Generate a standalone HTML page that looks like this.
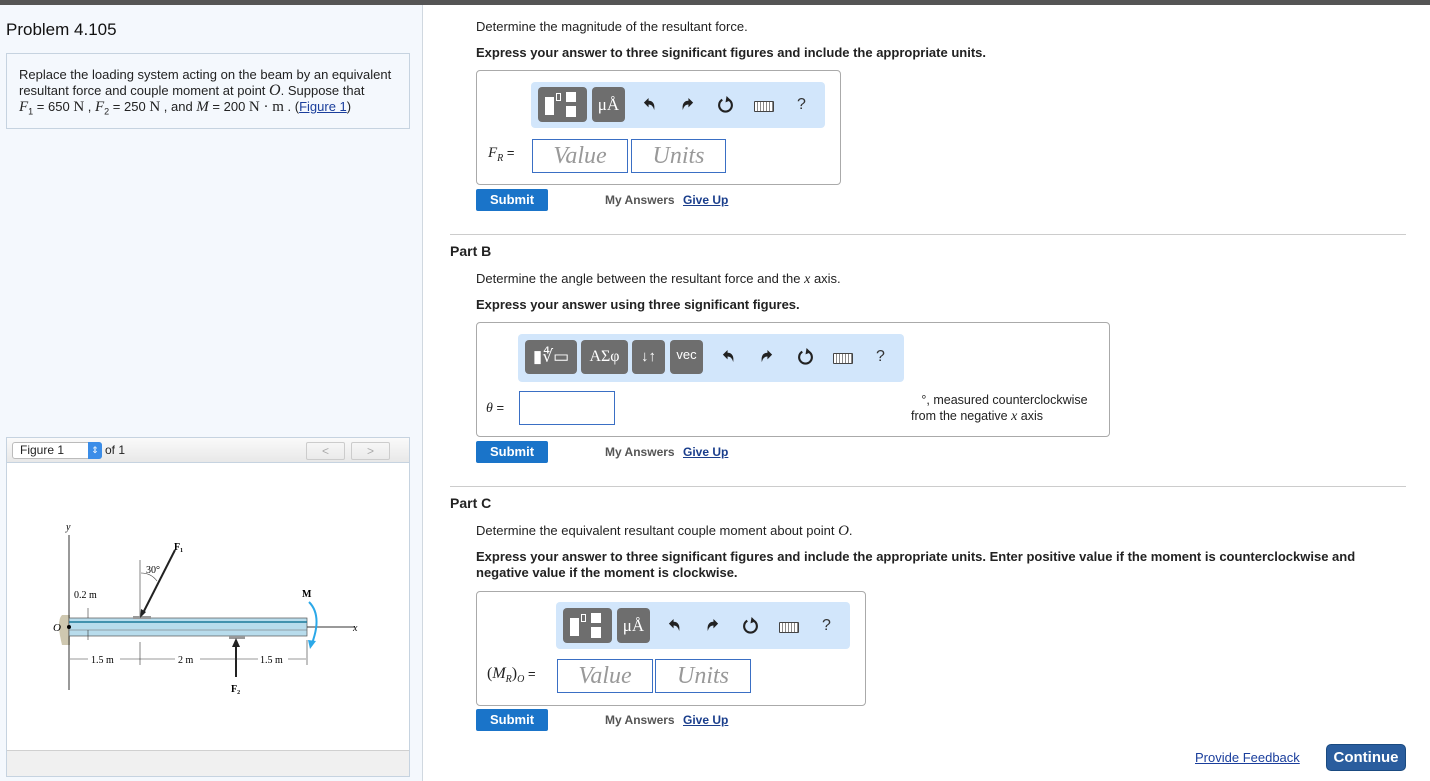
<!DOCTYPE html><html><head><meta charset="utf-8"><style>
*{margin:0;padding:0;box-sizing:border-box}
body{width:1430px;height:781px;overflow:hidden;font-family:"Liberation Sans",sans-serif;background:#fff;position:relative;font-size:13px;color:#222}
.a{position:absolute}
.m{font-family:"Liberation Serif",serif;font-style:italic}
.box{border:1px solid #aaa;border-radius:4px;background:#fff}
.tb{background:#d2e6fb;border-radius:4px}
.btn{background:#6e6e6e;border-radius:4px;color:#fff;text-align:center;font-family:"Liberation Serif",serif}
.in{border:1px solid #3a6fc4;background:#fff;color:#999;font-family:"Liberation Serif",serif;font-style:italic;font-size:24px;text-align:center}
.sub{background:#1a74c9;color:#fff;font-weight:bold;font-size:13px;text-align:center;border-radius:2px;width:72px;height:22px;line-height:22px}
.ma{font-weight:bold;font-size:12px;color:#555}
.gu{font-weight:bold;font-size:12px;color:#1a3e8c;text-decoration:underline}
.bold{font-weight:bold}
.kb{width:20px;height:11px;border:1.5px solid #444;border-radius:1px;background:repeating-linear-gradient(90deg,#fff 0 2px,#888 2px 3px)}
</style></head><body>
<div class="a" style="left:0;top:0;width:1430px;height:5px;background:#555"></div>
<div class="a" style="left:0;top:5px;width:423px;height:776px;background:#f4f8fd;border-right:1px solid #d0d8e0"></div>
<div class="a" style="left:6px;top:20px;font-size:17px;color:#111">Problem 4.105</div>
<div class="a" style="left:6px;top:53px;width:404px;height:76px;border:1px solid #c6d3e0;background:#f4f8fd"></div>
<div class="a" style="left:19px;top:67px;font-size:13px;line-height:16px;color:#222">Replace the loading system acting on the beam by an equivalent<br>resultant force and couple moment at point <span class="m" style="font-size:16px">O</span>. Suppose that<br><span class="m" style="font-size:15px">F</span><sub style="font-size:9px">1</sub> = 650 <span style="font-family:'Liberation Serif';font-size:15px">N</span> , <span class="m" style="font-size:15px">F</span><sub style="font-size:9px">2</sub> = 250 <span style="font-family:'Liberation Serif';font-size:15px">N</span> , and <span class="m" style="font-size:15px">M</span> = 200 <span style="font-family:'Liberation Serif';font-size:15px">N · m</span> . (<span style="color:#1a3e9c;text-decoration:underline">Figure 1</span>)</div>

<div class="a" style="left:6px;top:437px;width:404px;height:340px;border:1px solid #c6d3e0;background:#fff"></div>
<div class="a" style="left:7px;top:438px;width:402px;height:25px;background:linear-gradient(#fafafa,#e8e8e8);border-bottom:1px solid #c6d3e0"></div>
<div class="a" style="left:12px;top:442px;width:90px;height:17px;border:1px solid #bbb;border-radius:3px;background:#fff;font-size:12px;padding-left:7px;line-height:15px">Figure 1</div>
<div class="a" style="left:88px;top:442px;width:14px;height:17px;background:#3b8de8;border-radius:0 3px 3px 0;color:#fff;font-size:9px;text-align:center;line-height:17px">⇕</div>
<div class="a" style="left:105px;top:443px;font-size:12px">of 1</div>
<div class="a" style="left:306px;top:442px;width:39px;height:18px;border:1px solid #ccc;border-radius:2px;color:#aaa;text-align:center;font-size:12px;line-height:16px">&lt;</div>
<div class="a" style="left:351px;top:442px;width:39px;height:18px;border:1px solid #ccc;border-radius:2px;color:#aaa;text-align:center;font-size:12px;line-height:16px">&gt;</div>
<div class="a" style="left:7px;top:750px;width:402px;height:26px;background:#f0f0f0;border-top:1px solid #d0d0d0"></div>
<svg class="a" style="left:0;top:430px" width="420" height="280" viewBox="0 0 420 280" font-family="Liberation Serif">
<path d="M62 185 q-6 6 0 30 l8 0 0-30z" fill="#cfc8b0"/>
<line x1="69" y1="105" x2="69" y2="260" stroke="#333"/>
<text x="66" y="100" font-size="10" font-style="italic">y</text>
<rect x="69" y="188" width="238" height="18" fill="#b8dcec" stroke="#555" stroke-width="0.7"/>
<line x1="69" y1="192" x2="307" y2="192" stroke="#1b7a9a" stroke-width="1.5"/>
<line x1="69" y1="200" x2="307" y2="200" stroke="#666" stroke-width="0.5"/>
<line x1="307" y1="197" x2="355" y2="197" stroke="#333"/>
<text x="353" y="201" font-size="10" font-style="italic">x</text>
<text x="53" y="201" font-size="11" font-style="italic">O</text>
<circle cx="69" cy="197" r="2" fill="#000"/>
<rect x="133" y="186" width="18" height="3" fill="#999"/>
<rect x="229" y="206" width="16" height="3" fill="#999"/>
<line x1="175" y1="120" x2="143" y2="183" stroke="#222" stroke-width="2"/>
<path d="M140 188 l1-9 5 3z" fill="#222"/>
<line x1="140" y1="130" x2="140" y2="186" stroke="#333" stroke-width="0.6"/>
<path d="M141 143 q10 0 16 8" fill="none" stroke="#333" stroke-width="0.6"/>
<text x="146" y="143" font-size="10">30°</text>
<text x="174" y="120" font-size="10" font-weight="bold">F₁</text>
<line x1="236" y1="247" x2="236" y2="214" stroke="#222" stroke-width="2"/>
<path d="M236 208 l-4 9 8 0z" fill="#222"/>
<text x="231" y="262" font-size="10" font-weight="bold">F₂</text>
<text x="302" y="167" font-size="10" font-weight="bold">M</text>
<path d="M309 172 q14 14 2 44" fill="none" stroke="#2ba8e8" stroke-width="2"/>
<path d="M316 211 l-6 8 -2-9z" fill="#2ba8e8"/>
<text x="74" y="168" font-size="10">0.2 m</text>
<line x1="88" y1="178" x2="88" y2="188" stroke="#333" stroke-width="0.6"/>
<line x1="88" y1="200" x2="88" y2="210" stroke="#333" stroke-width="0.6"/>
<g stroke="#333" stroke-width="0.6"><line x1="70" y1="229" x2="88" y2="229"/><line x1="120" y1="229" x2="175" y2="229"/><line x1="200" y1="229" x2="258" y2="229"/><line x1="288" y1="229" x2="306" y2="229"/><line x1="140" y1="212" x2="140" y2="235"/><line x1="307" y1="210" x2="307" y2="235"/></g>
<text x="91" y="233" font-size="10">1.5 m</text>
<text x="178" y="233" font-size="10">2 m</text>
<text x="260" y="233" font-size="10">1.5 m</text>
</svg>

<svg width="0" height="0" style="position:absolute"><defs>
<symbol id="und" viewBox="0 0 16 16"><path d="M2 6 L7 1 V4 C12 4 14 8 13 14 C12 10 10 8 7 8 V11 Z" fill="#222"/></symbol>
<symbol id="red" viewBox="0 0 16 16"><path d="M14 6 L9 1 V4 C4 4 2 8 3 14 C4 10 6 8 9 8 V11 Z" fill="#222"/></symbol>
<symbol id="rel" viewBox="0 0 16 16"><path d="M11 3.5 A6 6 0 1 1 5 3.5" fill="none" stroke="#222" stroke-width="2"/><path d="M9 0 L13 4 L8 6 Z" fill="#222"/></symbol>
</defs></svg>

<!-- Part A -->
<div class="a" style="left:476px;top:19px">Determine the magnitude of the resultant force.</div>
<div class="a bold" style="left:476px;top:45px">Express your answer to three significant figures and include the appropriate units.</div>
<div class="a box" style="left:476px;top:70px;width:365px;height:115px"></div>
<div class="a tb" style="left:531px;top:82px;width:294px;height:46px"></div>
<div class="a btn" style="left:538px;top:87px;width:49px;height:35px"></div>
<div class="a" style="left:545px;top:97px;width:9px;height:18px;background:#fff"></div>
<div class="a" style="left:556px;top:93px;width:5px;height:8px;border:1px solid #fff"></div>
<div class="a" style="left:566px;top:92px;width:10px;height:10px;background:#fff"></div>
<div class="a" style="left:566px;top:106px;width:10px;height:11px;background:#fff"></div>
<div class="a btn" style="left:592px;top:87px;width:33px;height:35px;font-size:17px;line-height:35px">μÅ</div>
<svg class="a" style="left:642px;top:97px" width="15" height="15"><use href="#und"/></svg>
<svg class="a" style="left:680px;top:97px" width="15" height="15"><use href="#red"/></svg>
<svg class="a" style="left:717px;top:96px" width="17" height="17"><use href="#rel"/></svg>
<div class="a kb" style="left:754px;top:101px"></div>
<div class="a" style="left:797px;top:96px;font-size:16px;color:#333">?</div>
<div class="a" style="left:488px;top:145px"><span class="m" style="font-size:15px">F<sub style="font-size:10px">R</sub></span> =</div>
<div class="a in" style="left:532px;top:139px;width:96px;height:34px;line-height:32px">Value</div>
<div class="a in" style="left:631px;top:139px;width:95px;height:34px;line-height:32px">Units</div>
<div class="a sub" style="left:476px;top:189px">Submit</div>
<div class="a ma" style="left:605px;top:193px">My Answers</div>
<div class="a gu" style="left:683px;top:193px">Give Up</div>

<div class="a" style="left:450px;top:234px;width:956px;height:1px;background:#ccc"></div>
<div class="a bold" style="left:450px;top:243px;font-size:14px">Part B</div>
<div class="a" style="left:476px;top:271px">Determine the angle between the resultant force and the <span class="m" style="font-size:14px">x</span> axis.</div>
<div class="a bold" style="left:476px;top:297px">Express your answer using three significant figures.</div>
<div class="a box" style="left:476px;top:322px;width:634px;height:115px"></div>
<div class="a tb" style="left:518px;top:334px;width:386px;height:48px"></div>
<div class="a btn" style="left:525px;top:340px;width:52px;height:34px;font-size:17px;line-height:34px">▮∜▭</div>
<div class="a btn" style="left:581px;top:340px;width:47px;height:34px;font-size:16px;line-height:34px">ΑΣφ</div>
<div class="a btn" style="left:632px;top:340px;width:33px;height:34px;font-size:15px;line-height:34px">↓↑</div>
<div class="a btn" style="left:670px;top:340px;width:33px;height:34px;font-size:13px;line-height:30px;font-family:'Liberation Sans'">vec</div>
<svg class="a" style="left:721px;top:349px" width="15" height="15"><use href="#und"/></svg>
<svg class="a" style="left:759px;top:349px" width="15" height="15"><use href="#red"/></svg>
<svg class="a" style="left:797px;top:348px" width="17" height="17"><use href="#rel"/></svg>
<div class="a kb" style="left:833px;top:353px"></div>
<div class="a" style="left:876px;top:348px;font-size:16px;color:#333">?</div>
<div class="a" style="left:486px;top:400px"><span class="m" style="font-size:14px">θ</span> =</div>
<div class="a" style="left:519px;top:391px;width:96px;height:34px;border:1px solid #3a6fc4"></div>
<div class="a" style="left:911px;top:392px;line-height:16px;font-size:12.5px">&nbsp;&nbsp;&nbsp;°, measured counterclockwise<br>from the negative <span class="m" style="font-size:14px">x</span> axis</div>
<div class="a sub" style="left:476px;top:441px">Submit</div>
<div class="a ma" style="left:605px;top:445px">My Answers</div>
<div class="a gu" style="left:683px;top:445px">Give Up</div>

<div class="a" style="left:450px;top:486px;width:956px;height:1px;background:#ccc"></div>
<div class="a bold" style="left:450px;top:495px;font-size:14px">Part C</div>
<div class="a" style="left:476px;top:523px">Determine the equivalent resultant couple moment about point <span class="m" style="font-size:15px">O</span>.</div>
<div class="a bold" style="left:476px;top:549px;line-height:16px">Express your answer to three significant figures and include the appropriate units. Enter positive value if the moment is counterclockwise and<br>negative value if the moment is clockwise.</div>
<div class="a box" style="left:476px;top:591px;width:390px;height:115px"></div>
<div class="a tb" style="left:556px;top:602px;width:294px;height:47px"></div>
<div class="a btn" style="left:563px;top:608px;width:49px;height:35px"></div>
<div class="a" style="left:570px;top:618px;width:9px;height:18px;background:#fff"></div>
<div class="a" style="left:581px;top:614px;width:5px;height:8px;border:1px solid #fff"></div>
<div class="a" style="left:591px;top:613px;width:10px;height:10px;background:#fff"></div>
<div class="a" style="left:591px;top:627px;width:10px;height:11px;background:#fff"></div>
<div class="a btn" style="left:617px;top:608px;width:33px;height:35px;font-size:17px;line-height:35px">μÅ</div>
<svg class="a" style="left:667px;top:618px" width="15" height="15"><use href="#und"/></svg>
<svg class="a" style="left:705px;top:618px" width="15" height="15"><use href="#red"/></svg>
<svg class="a" style="left:742px;top:617px" width="17" height="17"><use href="#rel"/></svg>
<div class="a kb" style="left:779px;top:622px"></div>
<div class="a" style="left:822px;top:617px;font-size:16px;color:#333">?</div>
<div class="a" style="left:487px;top:665px"><span style="font-family:'Liberation Serif';font-size:16px">(<span class="m">M<sub style="font-size:10px">R</sub></span>)<sub class="m" style="font-size:10px">O</sub></span> =</div>
<div class="a in" style="left:557px;top:659px;width:96px;height:34px;line-height:32px">Value</div>
<div class="a in" style="left:655px;top:659px;width:96px;height:34px;line-height:32px">Units</div>
<div class="a sub" style="left:476px;top:709px">Submit</div>
<div class="a ma" style="left:605px;top:713px">My Answers</div>
<div class="a gu" style="left:683px;top:713px">Give Up</div>

<div class="a" style="left:1195px;top:750px;color:#1a3e9c;text-decoration:underline;font-size:13px">Provide Feedback</div>
<div class="a" style="left:1326px;top:744px;width:80px;height:27px;background:#2a5d9e;border:1px solid #1a4a80;border-radius:5px;color:#fff;font-weight:bold;font-size:15px;text-align:center;line-height:25px">Continue</div>
</body></html>
